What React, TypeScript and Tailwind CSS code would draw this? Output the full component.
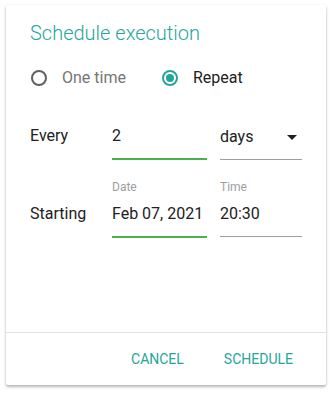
import React from "react";

function Radio({ checked }: { checked: boolean }) {
  return checked ? (
    <span className="w-[16px] h-[16px] rounded-full border-2 border-[#26a69a] flex items-center justify-center shrink-0">
      <span className="w-[8px] h-[8px] rounded-full bg-[#26a69a]" />
    </span>
  ) : (
    <span className="w-[16px] h-[16px] rounded-full border-2 border-[#616161] shrink-0" />
  );
}

export default function App() {
  return (
    <div className="min-h-screen bg-white" style={{ fontFamily: "Roboto, 'Noto Sans', sans-serif" }}>
      <div className="ml-[6px] mt-[5px] w-[320px] h-[380px] bg-white rounded-[2px] shadow-[0_2px_3px_rgba(0,0,0,0.28),0_0_2px_rgba(0,0,0,0.08)] flex flex-col">
        <div className="px-6 pt-[14px] text-[20px] font-light leading-[28px] text-[#26a69a]">Schedule execution</div>

        <div className="mt-[19px] px-6 flex items-center h-[24px] text-[16px]">
          <div className="w-[132px] flex items-center pl-[1px]">
            <Radio checked={false} />
            <span className="ml-[15px] text-[#757575]">One time</span>
          </div>
          <div className="flex items-center">
            <Radio checked={true} />
            <span className="ml-[15px] text-[#212121]">Repeat</span>
          </div>
        </div>

        <div className="mt-[34px] px-6 flex text-[16px] text-[#212121]">
          <div className="w-[82px] leading-[24px] pb-[12px]">Every</div>
          <div className="w-[95px] leading-[24px] pb-[10px] border-b-2 border-[#4caf50]">2</div>
          <div className="ml-[13px] w-[82px] leading-[24px] pb-[10px] border-b border-[#9e9e9e] flex items-center justify-between">
            <span>days</span>
            <svg width="24" height="24" viewBox="0 0 24 24" className="mr-[-2px]">
              <path d="M7 10l5 5 5-5z" fill="#212121" />
            </svg>
          </div>
        </div>

        <div className="mt-[19px] px-6 flex text-[16px] text-[#212121]">
          <div className="w-[82px] flex flex-col">
            <div className="h-[16px]" />
            <div className="mt-[7px] leading-[24px] pb-[12px]">Starting</div>
          </div>
          <div className="w-[95px] flex flex-col">
            <div className="text-[12px] leading-[16px] text-[#9e9e9e]">Date</div>
            <div className="mt-[7px] leading-[24px] pb-[10px] border-b-2 border-[#4caf50] whitespace-nowrap">Feb 07, 2021</div>
          </div>
          <div className="ml-[13px] w-[82px] flex flex-col">
            <div className="text-[12px] leading-[16px] text-[#9e9e9e]">Time</div>
            <div className="mt-[7px] leading-[24px] pb-[10px] border-b border-[#9e9e9e]">20:30</div>
          </div>
        </div>

        <div className="flex-1" />

        <div className="h-[53px] border-t border-[#e0e0e0] flex items-center justify-end pr-[25px] gap-[24px]">
          <button className="px-2 text-[14px] font-normal text-[#26a69a] uppercase">Cancel</button>
          <button className="px-2 text-[14px] font-normal text-[#26a69a] uppercase">Schedule</button>
        </div>
      </div>
    </div>
  );
}
